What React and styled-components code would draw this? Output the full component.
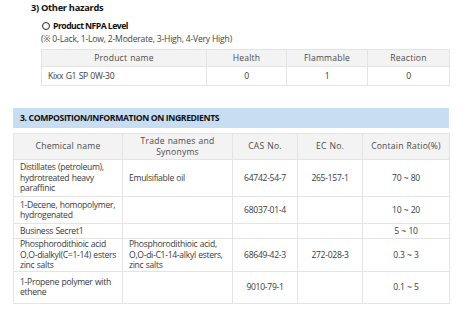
import React from 'react'
import styled, { createGlobalStyle } from 'styled-components'

const Global = createGlobalStyle`
  body {
    margin: 0;
    background: #fff;
    font-family: "Open Sans", "Noto Sans", sans-serif;
    color: #333;
  }
`

const Page = styled.div`
  width: 474px;
  height: 312px;
  padding: 1px 25px 0 13px;
  box-sizing: border-box;
  overflow: hidden;
`

const Hazards = styled.div`
  padding-left: 18px;
`

const Title = styled.div`
  font-size: 9.3px;
  font-weight: 700;
  color: #111;
  line-height: 14px;
  letter-spacing: -0.3px;
`

const SubTitle = styled.div`
  margin: 4px 0 0 11px;
  display: flex;
  align-items: center;
  gap: 3px;
  font-size: 8.7px;
  font-weight: 700;
  color: #111;
  line-height: 14px;
  letter-spacing: -0.55px;
`

const Circle = styled.span`
  width: 6px;
  height: 6px;
  border: 1px solid #222;
  border-radius: 50%;
`

const Note = styled.div`
  margin: 0 0 0 10px;
  font-size: 8.6px;
  line-height: 12px;
  color: #444;
  letter-spacing: -0.2px;
`

const Table = styled.table`
  border-collapse: collapse;
  table-layout: fixed;
  width: ${p => p.$w}px;
  margin-left: ${p => p.$ml || 0}px;
  margin-top: ${p => p.$mt || 0}px;
  font-size: 8.6px;
  color: #3a3a3a;
  line-height: 10.5px;
  letter-spacing: -0.3px;
  word-spacing: 0.5px;
`

const Row = styled.tr`
  height: ${p => p.$h}px;
`

const Th = styled.th`
  background: #f3f3f3;
  font-weight: 400;
  border: 1px solid #e4e4e4;
  padding: 0 4px;
  letter-spacing: 0.2px;
  color: #4a4a4a;
`

const Td = styled.td`
  border: 1px solid #e4e4e4;
  padding: 0 6px;
  text-align: ${p => (p.$left ? 'left' : 'center')};
  vertical-align: middle;
`

const Section = styled.div`
  margin-top: 22px;
  height: 20px;
  background: #c7ddf1;
  display: flex;
  align-items: center;
  padding-left: 7px;
  font-size: 8.7px;
  font-weight: 700;
  color: #111;
  letter-spacing: -0.4px;
`

const rows = [
  ['Distillates (petroleum), hydrotreated heavy paraffinic', 'Emulsifiable oil', '64742-54-7', '265-157-1', '70 ~ 80', 37],
  ['1-Decene, homopolymer, hydrogenated', '', '68037-01-4', '', '10 ~ 20', 27],
  ['Business Secret1', '', '', '', '5 ~ 10', 15],
  ['Phosphorodithioic acid O,O-dialkyl(C=1-14) esters zinc salts', 'Phosphorodithioic acid, O,O-di-C1-14-alkyl esters, zinc salts', '68649-42-3', '272-028-3', '0.3 ~ 3', 31],
  ['1-Propene polymer with ethene', '', '9010-79-1', '', '0.1 ~ 5', 32],
]

export default function App() {
  return (
    <Page>
      <Global />
      <Hazards>
        <Title>3) Other hazards</Title>
        <SubTitle><Circle />Product NFPA Level</SubTitle>
        <Note>(※ 0-Lack, 1-Low, 2-Moderate, 3-High, 4-Very High)</Note>
        <Table $w={408} $ml={10} $mt={4}>
          <colgroup>
            <col width="165" />
            <col width="80" />
            <col width="81" />
            <col width="82" />
          </colgroup>
          <thead>
            <Row $h={17}>
              <Th>Product name</Th>
              <Th>Health</Th>
              <Th>Flammable</Th>
              <Th>Reaction</Th>
            </Row>
          </thead>
          <tbody>
            <Row $h={19}>
              <Td $left>Kixx G1 SP 0W-30</Td>
              <Td>0</Td>
              <Td>1</Td>
              <Td>0</Td>
            </Row>
          </tbody>
        </Table>
      </Hazards>
      <Section>3. COMPOSITION/INFORMATION ON INGREDIENTS</Section>
      <Table $w={436} $mt={5}>
        <colgroup>
          <col width="109" />
          <col width="110" />
          <col width="65" />
          <col width="65" />
          <col width="87" />
        </colgroup>
        <thead>
          <Row $h={26}>
            <Th>Chemical name</Th>
            <Th>Trade names and Synonyms</Th>
            <Th>CAS No.</Th>
            <Th>EC No.</Th>
            <Th>Contain Ratio(%)</Th>
          </Row>
        </thead>
        <tbody>
          {rows.map(r => (
            <Row key={r[0]} $h={r[5]}>
              <Td $left>{r[0]}</Td>
              <Td $left>{r[1]}</Td>
              <Td>{r[2]}</Td>
              <Td>{r[3]}</Td>
              <Td>{r[4]}</Td>
            </Row>
          ))}
        </tbody>
      </Table>
    </Page>
  )
}
